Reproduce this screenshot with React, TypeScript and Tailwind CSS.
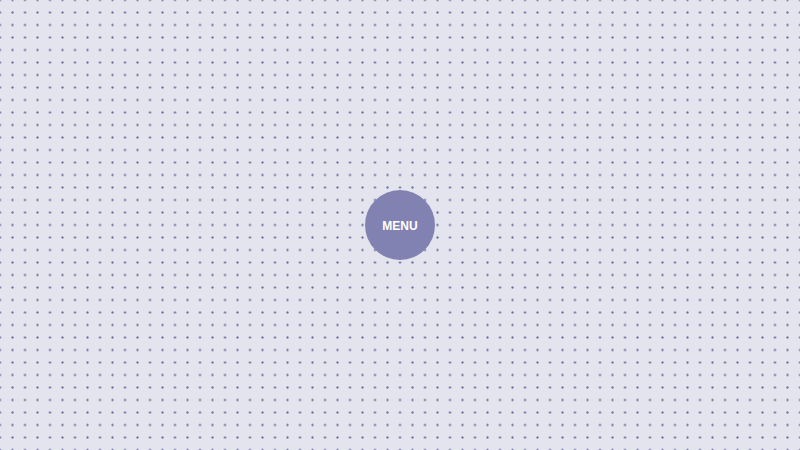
import React from "react";

export default function App() {
  return (
    <div className="relative flex h-screen w-full items-center justify-center bg-[#e4e4ee] bg-[radial-gradient(circle,#6e6e9c_0.7px,transparent_1.5px)] bg-size-[12.5px_12.5px] bg-position-[-6.25px_-6.25px]">
      {/* round menu trigger */}
      <button
        type="button"
        className="flex h-[70px] w-[70px] items-center justify-center rounded-full bg-[#8181b2] pt-px font-['Liberation_Sans',Arial,sans-serif] text-[12px] font-bold text-white"
      >
        MENU
      </button>
    </div>
  );
}
